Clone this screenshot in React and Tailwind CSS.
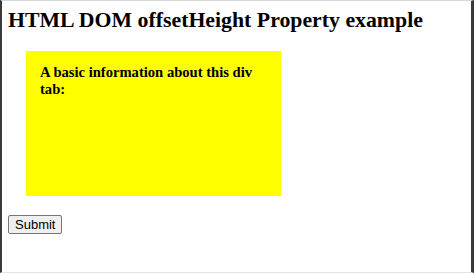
import React from 'react';

const App = () => {
  return (
    <div className="w-[474px] h-[273px] overflow-hidden bg-white border-l-2 border-r-[3px] border-t border-b border-l-[#3a3a3a] border-r-[#3a3a3a] border-t-[#d8d8d8] border-b-[#e4e4e4] pl-[6px]" style={{ fontFamily: '"Liberation Serif", "Times New Roman", serif' }}>
      <h1 className="mt-[7px] text-[21.8px] leading-[25px] font-bold text-black">
        HTML DOM offsetHeight Property example
      </h1>
      <div className="ml-[18px] mt-[18px] w-[255px] h-[145px] bg-[#ffff00] pl-[14px] pr-[14px] pt-[13px]">
        <p className="text-[14.6px] leading-[17px] font-bold text-black">
          A basic information about this div tab:
        </p>
      </div>
      <button
        className="mt-[19px] h-[19px] px-[6px] text-[13px] leading-none text-black bg-[#efefef] border border-[#767676] rounded-[2px]"
        style={{ fontFamily: '"Liberation Sans", Arial, sans-serif' }}
      >
        Submit
      </button>
    </div>
  );
};

export default App;
